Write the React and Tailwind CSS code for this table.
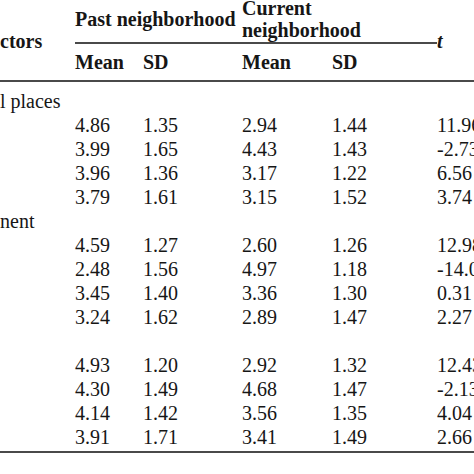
const groups = [
  {
    label: "l places",
    rows: [
      ["4.86", "1.35", "2.94", "1.44", "11.96"],
      ["3.99", "1.65", "4.43", "1.43", "-2.73"],
      ["3.96", "1.36", "3.17", "1.22", "6.56"],
      ["3.79", "1.61", "3.15", "1.52", "3.74"],
    ],
  },
  {
    label: "nent",
    rows: [
      ["4.59", "1.27", "2.60", "1.26", "12.98"],
      ["2.48", "1.56", "4.97", "1.18", "-14.06"],
      ["3.45", "1.40", "3.36", "1.30", "0.31"],
      ["3.24", "1.62", "2.89", "1.47", "2.27"],
    ],
  },
  {
    label: "",
    rows: [
      ["4.93", "1.20", "2.92", "1.32", "12.43"],
      ["4.30", "1.49", "4.68", "1.47", "-2.13"],
      ["4.14", "1.42", "3.56", "1.35", "4.04"],
      ["3.91", "1.71", "3.41", "1.49", "2.66"],
    ],
  },
];

const DataRow = ({ cells }) => (
  <div className="flex h-[24px] leading-[24px]">
    <div className="w-[75px] shrink-0" />
    <div className="w-[68px] shrink-0">{cells[0]}</div>
    <div className="w-[99px] shrink-0">{cells[1]}</div>
    <div className="w-[90px] shrink-0">{cells[2]}</div>
    <div className="w-[105px] shrink-0">{cells[3]}</div>
    <div className="w-[100px] shrink-0 whitespace-nowrap">{cells[4]}</div>
  </div>
);

export default function App() {
  return (
    <div className="w-[474px] h-[474px] overflow-hidden bg-white text-[#161616] font-['Liberation_Serif','Times_New_Roman',serif] text-[20px]">
      <div className="w-[537px]">
        {/* header */}
        <div className="flex h-[82px] border-b-2 border-[#4a4a4a] font-bold">
          <div className="w-[75px] shrink-0 flex items-center pt-[1px]">ctors</div>
          <div className="w-[362px] shrink-0 flex flex-col">
            <div className="flex h-[44px] border-b-2 border-[#4a4a4a]">
              <div className="w-[167px] shrink-0 pt-[7px] leading-[24px] whitespace-nowrap">
                Past neighborhood
              </div>
              <div className="mt-[-3px] leading-[22px]">
                Current
                <br />
                neighborhood
              </div>
            </div>
            <div className="flex h-[36px] items-center">
              <div className="w-[68px] shrink-0">Mean</div>
              <div className="w-[99px] shrink-0">SD</div>
              <div className="w-[90px] shrink-0">Mean</div>
              <div className="w-[105px] shrink-0">SD</div>
            </div>
          </div>
          <div className="flex items-center pt-[2px] italic">t</div>
        </div>

        {/* body */}
        <div className="pt-[7px] pb-[2px] border-b-2 border-[#4a4a4a]">
          {groups.map((g, gi) => (
            <div key={gi}>
              <div className="h-[24px] leading-[24px] whitespace-nowrap">{g.label}</div>
              {g.rows.map((r, ri) => (
                <DataRow key={ri} cells={r} />
              ))}
            </div>
          ))}
        </div>
      </div>
    </div>
  );
}
